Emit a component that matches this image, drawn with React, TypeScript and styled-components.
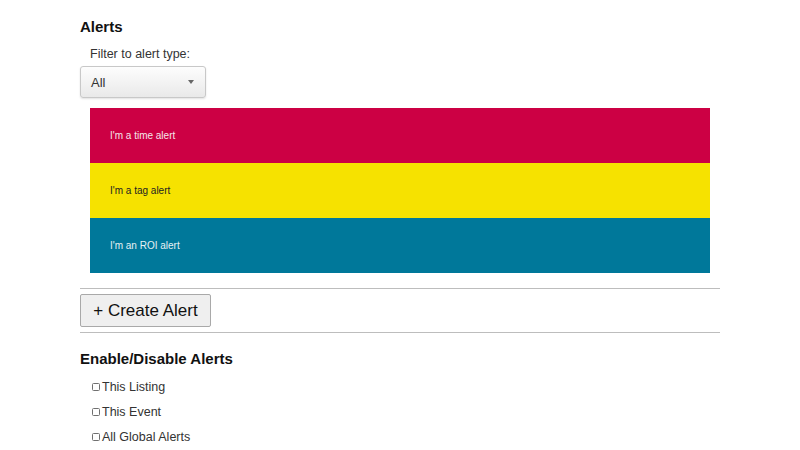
import React, { useState } from 'react'
import styled, { createGlobalStyle } from 'styled-components'

const GlobalStyle = createGlobalStyle`
  body {
    margin: 0;
    background: #ffffff;
    font-family: "Liberation Sans", Arial, sans-serif;
    color: #222;
  }
`

const Page = styled.div`
  width: 640px;
  margin: 0 auto;
  padding-top: 17px;
`

const Heading = styled.h3`
  margin: 0;
  font-size: 15px;
  line-height: 20px;
  font-weight: 700;
  color: #111;
`

const FilterLabel = styled.label`
  display: block;
  padding-left: 10px;
  margin-top: 8px;
  font-size: 12.5px;
  line-height: 18px;
  color: #333;
`

const SelectBox = styled.div`
  position: relative;
  box-sizing: border-box;
  width: 126px;
  height: 32px;
  margin-top: 3px;
  border: 1px solid #c8c8c8;
  border-radius: 3px;
  background: linear-gradient(#fdfdfd, #e9e9e9);
  box-shadow: 0 1px 2px rgba(0, 0, 0, 0.12);
  display: flex;
  align-items: center;
  padding-left: 10px;
  font-size: 13px;
  color: #333;
`

const Caret = styled.span`
  position: absolute;
  right: 11px;
  top: 13px;
  width: 0;
  height: 0;
  border-left: 3px solid transparent;
  border-right: 3px solid transparent;
  border-top: 4px solid #666;
`

const AlertList = styled.ul`
  list-style: none;
  margin: 10px 10px 0;
  padding: 0;
`

const AlertItem = styled.li<{ $bg: string; $fg: string }>`
  height: 55px;
  display: flex;
  align-items: center;
  padding-left: 20px;
  background: ${({ $bg }) => $bg};
  color: ${({ $fg }) => $fg};
  font-size: 10px;
`

const Rule = styled.hr<{ $top: number }>`
  margin: ${({ $top }) => $top}px 0 0;
  border: none;
  border-top: 1px solid #bdbdbd;
  height: 0;
`

const CreateButton = styled.button`
  box-sizing: border-box;
  display: block;
  margin-top: 5px;
  width: 131px;
  height: 33px;
  border: 1px solid #a9a9a9;
  border-radius: 2px;
  background: #efefef;
  font-family: "Liberation Sans", Arial, sans-serif;
  font-size: 17px;
  color: #111;
  padding: 0;
  cursor: pointer;
`

const Section = styled.div`
  margin-top: 16px;
`

const ToggleList = styled.div`
  display: flex;
  flex-direction: column;
  gap: 7px;
  margin-top: 9px;
  padding-left: 12px;
`

const ToggleRow = styled.label`
  display: flex;
  align-items: center;
  height: 18px;
  font-size: 12.5px;
  color: #333;
  cursor: pointer;
`

const Box = styled.input`
  appearance: none;
  box-sizing: border-box;
  width: 8px;
  height: 8px;
  margin: 0 2px 0 0;
  border: 1px solid #707070;
  border-radius: 1.5px;
  background: #fff;
  &:checked {
    background: #0b6bcb;
    border-color: #0b6bcb;
  }
`

const alerts = [
  { text: "I'm a time alert", bg: '#cc0044', fg: '#f4e6ea' },
  { text: "I'm a tag alert", bg: '#f6e200', fg: '#222222' },
  { text: "I'm an ROI alert", bg: '#00789a', fg: '#e6f1f4' },
]

const toggles = ['This Listing', 'This Event', 'All Global Alerts']

const App = () => {
  const [checked, setChecked] = useState<boolean[]>([false, false, false])

  return (
    <>
      <GlobalStyle />
      <Page>
        <Heading>Alerts</Heading>
        <FilterLabel>Filter to alert type:</FilterLabel>
        <SelectBox>
          All
          <Caret />
        </SelectBox>
        <AlertList>
          {alerts.map(a => (
            <AlertItem key={a.text} $bg={a.bg} $fg={a.fg}>{a.text}</AlertItem>
          ))}
        </AlertList>
        <Rule $top={15} />
        <CreateButton>+ Create Alert</CreateButton>
        <Rule $top={5} />
        <Section>
          <Heading>Enable/Disable Alerts</Heading>
          <ToggleList>
            {toggles.map((t, i) => (
              <ToggleRow key={t}>
                <Box
                  type="checkbox"
                  checked={checked[i]}
                  onChange={() => setChecked(prev => prev.map((c, j) => (j === i ? !c : c)))}
                />
                {t}
              </ToggleRow>
            ))}
          </ToggleList>
        </Section>
      </Page>
    </>
  )
}

export default App
